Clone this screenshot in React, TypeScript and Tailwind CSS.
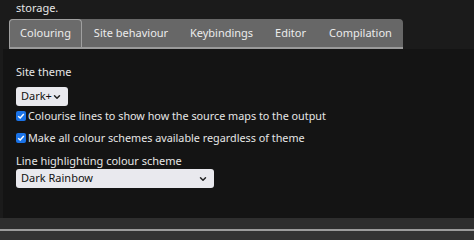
import { ChevronDown } from "lucide-react";

const tabs = [
  { label: "Colouring", w: "w-[73px]" },
  { label: "Site behaviour", w: "w-[98px]" },
  { label: "Keybindings", w: "w-[83px]" },
  { label: "Editor", w: "w-[55px]" },
  { label: "Compilation", w: "w-[85px]" },
];

function Select({ value, width }: { value: string; width: string }) {
  return (
    <div
      className={`flex h-[19px] items-center justify-between rounded-[3px] bg-[#e9e9ee] pl-[5px] pr-[6px] text-[11px] text-[#111] ${width}`}
    >
      <span className="whitespace-nowrap">{value}</span>
      <ChevronDown className="h-[10px] w-[10px] shrink-0 text-[#222]" strokeWidth={3.5} />
    </div>
  );
}

function Check({ label }: { label: string }) {
  return (
    <label className="flex h-[22px] items-center gap-[2px]">
      <span className="flex h-[10px] w-[10px] items-center justify-center rounded-[2px] bg-[#1a73e8]">
        <svg viewBox="0 0 10 10" className="h-[8px] w-[8px]">
          <path d="M1.5 5.2 L4 7.5 L8.5 2.5" fill="none" stroke="white" strokeWidth="1.8" />
        </svg>
      </span>
      <span className="whitespace-nowrap text-[10.8px] text-[#e6e6e6]">{label}</span>
    </label>
  );
}

export default function App() {
  return (
    <div
      className="flex h-[240px] w-[474px] flex-col overflow-hidden bg-[#1b1b1b] text-[10.8px]"
      style={{ fontFamily: "'Noto Sans', sans-serif" }}
    >
      <div className="h-[19px] pl-4">
        <p className="-mt-[2px] text-[11px] leading-[20px] text-[#e6e6e6]">storage.</p>
      </div>

      {/* Tabs */}
      <div className="flex pl-[9px]">
        <div className="flex h-[30px] rounded-t-[4px] border-b-2 border-[#9a9a9a] bg-[#676767]">
          {tabs.map((t, i) => (
            <div
              key={t.label}
              className={`flex items-center justify-center whitespace-nowrap text-[11px] text-[#ececec] ${t.w} ${
                i === 0 ? "rounded-t-[4px] border border-b-0 border-[#a0a0a0] bg-[#6b6b6b]" : ""
              }`}
            >
              {t.label}
            </div>
          ))}
        </div>
      </div>

      {/* Panel */}
      <div className="ml-[3px] flex h-[169px] flex-col bg-[#141414] pl-[13px] pt-[15px]">
        <p className="h-[22px] text-[11px] text-[#e6e6e6]">Site theme</p>
        <div className="mt-[1px]">
          <Select value="Dark+" width="w-[52px]" />
        </div>
        <div className="-mt-[1px]">
          <Check label="Colourise lines to show how the source maps to the output" />
          <Check label="Make all colour schemes available regardless of theme" />
        </div>
        <p className="mt-[3px] h-[17px] text-[11px] leading-[17px] text-[#e6e6e6]">Line highlighting colour scheme</p>
        <Select value="Dark Rainbow" width="w-[198px]" />
      </div>

      <div className="h-[11px] bg-[#2e2e2e]" />
      <div className="h-[2px] bg-[#9c9c9c]" />
      <div className="flex-1 bg-[#333]" />
    </div>
  );
}
